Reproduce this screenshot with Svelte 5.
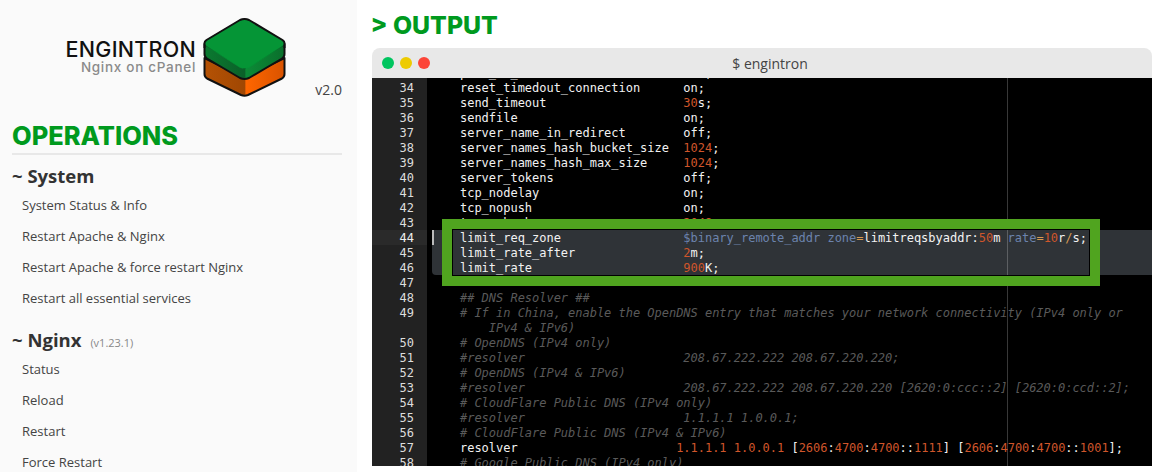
<script>
  const P = (t) => ({ t, c: 'w' });
  const n = (t) => ({ t, c: 'n' });
  const b = (t) => ({ t, c: 'b' });
  const y = (t) => ({ t, c: 'y' });
  const pad = (s, w) => s.padEnd(w, ' ');

  const conf = (name, val, unit = '') => [P(pad(name, 31)), val.match(/^\d/) ? n(val) : P(val), P(unit)];
  const c = (t) => [{ t, c: 'c' }];

  const lines = [
    { no: 33, parts: conf('port_in_redirect', 'off;') },
    { no: 34, parts: conf('reset_timedout_connection', 'on;') },
    { no: 35, parts: conf('send_timeout', '30', 's;') },
    { no: 36, parts: conf('sendfile', 'on;') },
    { no: 37, parts: conf('server_name_in_redirect', 'off;') },
    { no: 38, parts: conf('server_names_hash_bucket_size', '1024', ';') },
    { no: 39, parts: conf('server_names_hash_max_size', '1024', ';') },
    { no: 40, parts: conf('server_tokens', 'off;') },
    { no: 41, parts: conf('tcp_nodelay', 'on;') },
    { no: 42, parts: conf('tcp_nopush', 'on;') },
    { no: 43, parts: conf('types_hash_max', '2048', ';') },
    {
      no: 44,
      hl: true,
      active: true,
      parts: [
        P(pad('limit_req_zone', 31)),
        b('$binary_remote_addr zone'),
        y('='),
        P('limitreqsbyaddr:'),
        n('50'),
        P('m '),
        b('rate'),
        y('='),
        n('10'),
        P('r'),
        y('/'),
        P('s;')
      ]
    },
    { no: 45, hl: true, parts: conf('limit_rate_after', '2', 'm;') },
    { no: 46, hl: true, end: true, parts: conf('limit_rate', '900', 'K;') },
    { no: 47, parts: [] },
    { no: 48, parts: c('## DNS Resolver ##') },
    { no: 49, parts: c('# If in China, enable the OpenDNS entry that matches your network connectivity (IPv4 only or') },
    { no: '', parts: c('    IPv4 & IPv6)') },
    { no: 50, parts: c('# OpenDNS (IPv4 only)') },
    { no: 51, parts: c(pad('#resolver', 31) + '208.67.222.222 208.67.220.220;') },
    { no: 52, parts: c('# OpenDNS (IPv4 & IPv6)') },
    { no: 53, parts: c(pad('#resolver', 31) + '208.67.222.222 208.67.220.220 [2620:0:ccc::2] [2620:0:ccd::2];') },
    { no: 54, parts: c('# CloudFlare Public DNS (IPv4 only)') },
    { no: 55, parts: c(pad('#resolver', 31) + '1.1.1.1 1.0.0.1;') },
    { no: 56, parts: c('# CloudFlare Public DNS (IPv4 & IPv6)') },
    {
      no: 57,
      parts: [
        P(pad('resolver', 30)),
        n('1.1.1.1 1.0.0.1 '),
        P('['),
        n('2606'),
        P(':'),
        n('4700'),
        P(':'),
        n('4700'),
        P('::'),
        n('1111'),
        P('] ['),
        n('2606'),
        P(':'),
        n('4700'),
        P(':'),
        n('4700'),
        P('::'),
        n('1001'),
        P('];')
      ]
    },
    { no: 58, parts: c('# Google Public DNS (IPv4 only)') }
  ];

  const groups = [
    {
      title: 'System',
      links: ['System Status & Info', 'Restart Apache & Nginx', 'Restart Apache & force restart Nginx', 'Restart all essential services']
    },
    { title: 'Nginx', version: '(v1.23.1)', links: ['Status', 'Reload', 'Restart', 'Force Restart'] }
  ];
</script>

<div class="page">
  <aside class="sidebar">
    <div class="logo">
      <div class="logo-text">
        <div class="brand">ENGINTRON</div>
        <div class="tagline">Nginx on cPanel</div>
      </div>
      <svg class="cube" width="84" height="80" viewBox="0 0 84 80">
        <defs>
          <linearGradient id="orangeFace" x1="0" x2="1" y1="0" y2="0">
            <stop offset="0" stop-color="#b55204" />
            <stop offset="0.5" stop-color="#a04703" />
            <stop offset="0.52" stop-color="#ff6600" />
            <stop offset="1" stop-color="#d95300" />
          </linearGradient>
          <linearGradient id="greenFace" x1="0" x2="1" y1="0" y2="0">
            <stop offset="0" stop-color="#0a7a30" />
            <stop offset="0.5" stop-color="#0b6029" />
            <stop offset="0.52" stop-color="#0c8a36" />
            <stop offset="1" stop-color="#0a6f2c" />
          </linearGradient>
        </defs>
        <path d="M1.5 40 V56 Q1.5 59 4 60.5 L38 77 Q41.5 78.5 45 77 L79 60.5 Q81.5 59 81.5 56 V40 L41.5 60 Z" fill="url(#orangeFace)" stroke="#111" stroke-width="2" stroke-linejoin="round" />
        <path d="M1.5 26 V36 Q1.5 39 4 40.5 L37 60 Q41.5 62 46 60 L79 40.5 Q81.5 39 81.5 36 V26 L41.5 50 Z" fill="url(#greenFace)" stroke="#111" stroke-width="2" stroke-linejoin="round" />
        <path d="M3.5 22 L37 2 Q41.5 0 46 2 L79.5 22 Q83 25 79.5 28 L46 49.5 Q41.5 51.5 37 49.5 L3.5 28 Q0 25 3.5 22 Z" fill="#059536" stroke="#059536" stroke-width="0.5" stroke-linejoin="round" />
        <path d="M1.5 30 V25 Q1.5 23.5 3.5 22 L37 2 Q41.5 0 46 2 L79.5 22 Q81.5 23.5 81.5 25 V30" fill="none" stroke="#111" stroke-width="2" stroke-linejoin="round" />
      </svg>
    </div>
    <div class="version">v2.0</div>
    <h2 class="ops">OPERATIONS</h2>
    {#each groups as group}
      <h3 class="group">~ {group.title}{#if group.version}<small>{group.version}</small>{/if}</h3>
      <ul>
        {#each group.links as link}
          <li>{link}</li>
        {/each}
      </ul>
    {/each}
  </aside>

  <main class="main">
    <h2 class="output">&gt; OUTPUT</h2>
    <div class="window">
      <div class="titlebar">
        <span class="dot green"></span>
        <span class="dot yellow"></span>
        <span class="dot red"></span>
        <span class="title">$ engintron</span>
      </div>
      <div class="editor">
        <div class="code">
          {#each lines as line}
            <div class="line" class:hl={line.hl} class:active={line.active} class:end={line.end}>
              <span class="no">{line.no}</span><span class="src">{#each line.parts as part}<span class={part.c}>{part.t}</span>{/each}</span>
            </div>
          {/each}
        </div>
        <div class="ruler"></div>
        <div class="callout"></div>
      </div>
    </div>
  </main>
</div>

<style>
  :global(body) {
    background: #fff;
    overflow: hidden;
  }

  .page {
    display: flex;
    height: 472px;
    overflow: hidden;
    font-family: "Open Sans", sans-serif;
  }

  .sidebar {
    width: 357px;
    flex: none;
    box-sizing: border-box;
    background: #fafafa;
    padding: 15px 15px 0 12px;
    overflow: hidden;
  }

  .logo {
    display: flex;
    justify-content: flex-end;
    align-items: center;
    padding-right: 55px;
    gap: 7px;
    height: 82px;
  }

  .logo-text {
    text-align: right;
    margin-top: 1px;
  }

  .brand {
    font-family: Inter, sans-serif;
    font-weight: 500;
    font-size: 21.5px;
    line-height: 22px;
    letter-spacing: 0.25px;
    color: #111;
  }

  .tagline {
    font-family: Inter, sans-serif;
    font-weight: 500;
    font-size: 13.5px;
    line-height: 15px;
    color: #8a8a8a;
    letter-spacing: 0.7px;
  }

  .cube {
    flex: none;
    margin-top: 4px;
  }

  .version {
    text-align: right;
    font-size: 14px;
    line-height: 18px;
    color: #444;
    margin-top: -16px;
  }

  .ops {
    margin: 20px 0 0;
    padding-bottom: 1px;
    border-bottom: 2px solid #e8e8e8;
    font-family: Inter, sans-serif;
    font-weight: 800;
    font-size: 25.4px;
    line-height: 33px;
    color: #009a1e;
  }

  .group {
    margin: 9px 0 0;
    font-size: 18.5px;
    line-height: 24px;
    font-weight: 700;
    color: #333;
  }

  .group small {
    font-size: 11px;
    line-height: 1;
    font-weight: 400;
    color: #888;
    margin-left: 9px;
  }

  ul {
    list-style: none;
    margin: 0 0 14px;
    padding: 2px 0 0 10px;
  }

  li {
    height: 31px;
    line-height: 31px;
    font-size: 13px;
    color: #444;
  }

  .main {
    flex: 1;
    padding: 8px 2px 0 15px;
    min-width: 0;
  }

  .output {
    margin: 0;
    font-family: Inter, sans-serif;
    font-weight: 800;
    font-size: 24.8px;
    line-height: 34px;
    text-indent: -1.5px;
    color: #009a1e;
  }

  .window {
    margin-top: 6px;
    border-radius: 8px 8px 0 0;
    overflow: hidden;
  }

  .titlebar {
    display: flex;
    align-items: center;
    gap: 6px;
    height: 30px;
    padding-left: 10px;
    background: #e8e8e8;
  }

  .dot {
    width: 12px;
    height: 12px;
    border-radius: 50%;
  }

  .green {
    background: #00c55f;
  }

  .yellow {
    background: #edcb00;
  }

  .red {
    background: #fc4538;
  }

  .title {
    flex: 1;
    text-align: center;
    margin-right: 48px;
    font-size: 14px;
    color: #444;
  }

  .editor {
    position: relative;
    height: 388px;
    overflow: hidden;
    background: #000;
  }

  .code {
    margin-top: -13px;
    font-family: "DejaVu Sans Mono", monospace;
    font-size: 12px;
    line-height: 15px;
    letter-spacing: -0.02px;
    white-space: pre;
  }

  .line {
    display: flex;
    height: 15px;
  }

  .no {
    flex: none;
    width: 55px;
    box-sizing: border-box;
    padding: 1px 13px 0 0;
    text-align: right;
    background: #222;
    color: #ddd;
  }

  .src {
    flex: 1;
    box-sizing: border-box;
    margin-left: 5px;
    padding: 1px 0 0 28px;
    color: #f2f2f2;
  }

  .line.active .no {
    background: #2a2a2a;
    color: #eee;
  }

  .line.hl .src {
    background: #2f3337;
  }

  .line.active .src {
    box-shadow: inset 2px 0 #bbb;
  }

  .line.end .src {
    border-bottom-left-radius: 4px;
  }

  .w {
    color: #f2f2f2;
  }

  .n {
    color: #d0562b;
  }

  .b {
    color: #6c83ad;
  }

  .y {
    color: #d79a52;
  }

  .c {
    color: #5a5a5a;
    font-style: italic;
  }

  .ruler {
    position: absolute;
    top: 0;
    bottom: 0;
    left: 635px;
    width: 1px;
    background: rgba(255, 255, 255, 0.22);
  }

  .callout {
    position: absolute;
    left: 70px;
    top: 141px;
    width: 658px;
    height: 67px;
    box-sizing: border-box;
    border: 10px solid #50a41f;
    outline: 1px solid #000;
    outline-offset: -11px;
  }
</style>
